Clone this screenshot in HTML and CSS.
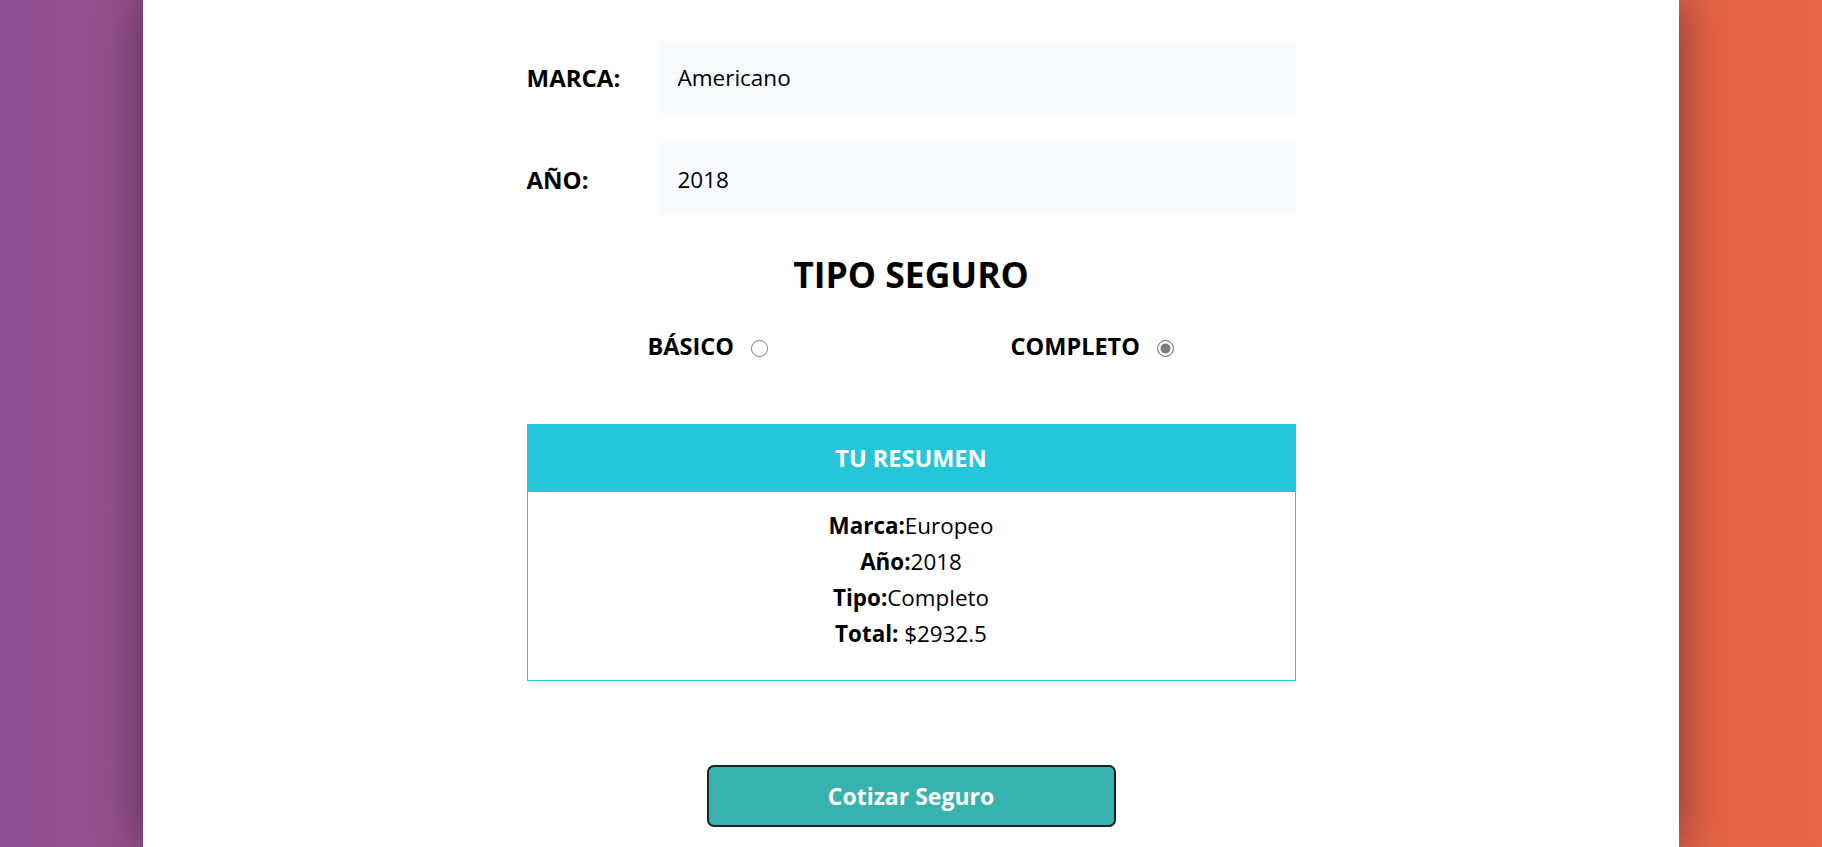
FILE: index.html
```html
<!DOCTYPE html>
<html lang="es">
<head>
    <meta charset="UTF-8">
    <meta name="viewport" content="width=device-width, initial-scale=1.0">
    <title>Cotizador de Seguros</title>
    <link rel="stylesheet" href="styles.css">
</head>
<body>
    <div class="contenedor">
        <form class="formulario">
            <div class="campo">
                <label for="marca">MARCA:</label>
                <input type="text" id="marca" value="Americano">
            </div>

            <div class="campo">
                <label for="year">AÑO:</label>
                <input type="text" id="year" value="2018">
            </div>

            <h2 class="titulo-plan">TIPO SEGURO</h2>

            <div class="planes">
                <div class="plan">
                    <label for="basico">BÁSICO</label>
                    <input type="radio" id="basico" name="plan" value="basico">
                </div>
                <div class="plan">
                    <label for="completo">COMPLETO</label>
                    <input type="radio" id="completo" name="plan" value="completo" checked>
                </div>
            </div>

            <div class="resumen">
                <h3 class="resumen-titulo">TU RESUMEN</h3>
                <ul class="resumen-lista">
                    <li><strong>Marca:</strong>Europeo</li>
                    <li><strong>Año:</strong>2018</li>
                    <li><strong>Tipo:</strong>Completo</li>
                    <li><strong>Total:</strong> $2932.5</li>
                </ul>
            </div>

            <div class="acciones">
                <button type="submit" class="btn-cotizar">Cotizar Seguro</button>
            </div>
        </form>
    </div>
</body>
</html>
```

FILE: styles.css
```css
html, body {
    margin: 0;
    padding: 0;
}
body {
    font-family: "Open Sans", "Noto Sans", Arial, sans-serif;
    background: linear-gradient(to right, #8f4f94 0%, #e96444 100%);
    color: #000;
    overflow: hidden;
}
.contenedor {
    max-width: 1536px;
    margin: 0 auto;
    min-height: 100vh;
    background-color: #fff;
    box-shadow: 0 0 45px rgba(0, 0, 0, 0.45);
    box-sizing: border-box;
}
.formulario {
    width: 769px;
    margin: 0 auto;
    padding: 41px 0 4px;
}
.campo {
    display: flex;
    align-items: center;
    margin-bottom: 30px;
}
.campo label {
    flex: 0 0 133px;
    font-size: 24px;
    font-weight: 700;
}
.campo input {
    flex: 1;
    height: 72px;
    padding: 0 18px;
    border: none;
    background-color: #f7fafc;
    font-family: inherit;
    font-size: 22.5px;
    color: #000;
    box-sizing: border-box;
}
.titulo-plan {
    margin: 38px 0 0;
    font-size: 35.5px;
    line-height: 43px;
    text-align: center;
}
.planes {
    display: grid;
    grid-template-columns: 1fr 1fr;
    margin-top: 35px;
    line-height: 30px;
}
.plan {
    display: flex;
    justify-content: center;
    align-items: center;
    padding-right: 22px;
}
.plan label {
    font-size: 23.5px;
    font-weight: 700;
}
.plan input[type="radio"] {
    appearance: none;
    -webkit-appearance: none;
    width: 17px;
    height: 17px;
    margin: 4px 0 0 17px;
    border: 1.5px solid #7a7a7a;
    border-radius: 50%;
    background-color: #fff;
    box-sizing: border-box;
}
.plan input[type="radio"]:checked {
    background-color: #7d7d7d;
    box-shadow: inset 0 0 0 2.5px #fff;
}
.resumen {
    margin-top: 63px;
    border: 1px solid #26c6da;
    text-align: center;
}
.resumen-titulo {
    margin: 0;
    height: 67px;
    line-height: 67px;
    background-color: #26c6da;
    color: #fff;
    font-size: 23.5px;
    font-weight: 700;
}
.resumen-lista {
    list-style: none;
    margin: 0;
    padding: 16px 0 28px;
    font-size: 22.4px;
    line-height: 36px;
}
.acciones {
    margin-top: 84px;
    text-align: center;
}
.btn-cotizar {
    width: 409px;
    height: 62px;
    background-color: #38b2ac;
    color: #fff;
    border: 2.5px solid #1a202c;
    border-radius: 7px;
    font-family: inherit;
    font-size: 23px;
    font-weight: 700;
    cursor: pointer;
}
.btn-cotizar:hover {
    background-color: #319795;
}
```
